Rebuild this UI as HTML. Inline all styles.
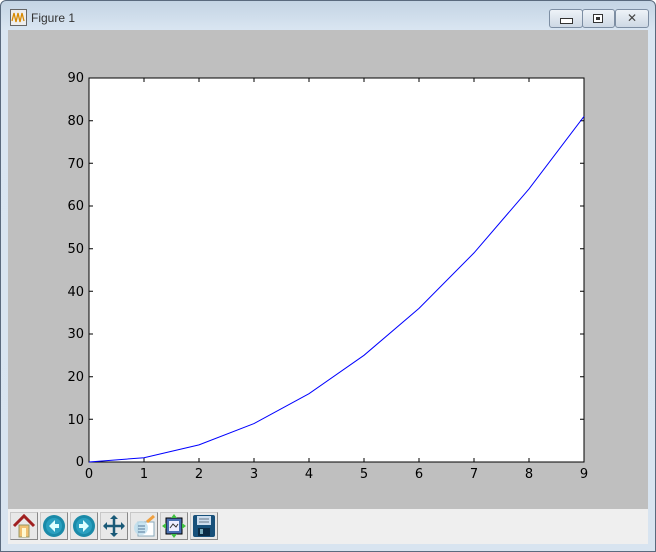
<!DOCTYPE html>
<html><head><style>
body{margin:0;width:656px;height:552px;overflow:hidden;font-family:"DejaVu Sans","Liberation Sans",sans-serif;}
.win{position:absolute;left:0;top:0;width:654px;height:550px;border:1px solid #5a6a7e;border-radius:6px 6px 0 0;background:linear-gradient(#c4d4e4,#dae6f2 30px,#d8e4f0);}
.client{position:absolute;left:8px;top:30px;width:640px;height:514px;background:#bfbfbf;}
.tb{position:absolute;left:0;top:479px;width:640px;height:35px;background:#efefef;}
.title{position:absolute;left:30px;top:10px;font-size:12px;color:#333;font-family:"Liberation Sans",sans-serif;}
.btn{position:absolute;top:8px;height:17px;border:1px solid #7d8ea3;border-radius:3px;background:linear-gradient(#eef3f8,#cdd8e4);}
.tbb{position:absolute;top:3px;width:28px;height:28px;border:1px solid #c8c8c8;border-right-color:#888;border-bottom-color:#888;background:#e8e8e8;box-sizing:border-box;}
</style></head><body>
<div class="win">
<svg style="position:absolute;left:9px;top:8px" width="18" height="18"><rect x="0.5" y="0.5" width="16" height="16" fill="#eee" stroke="#666"/><path d="M2 12 L4 4 L6 13 L8 4 L10 13 L12 4 L14 12" fill="none" stroke="#d98a00" stroke-width="1.3"/></svg>
<div class="title">Figure 1</div>
<div class="btn" style="left:548px;width:32px"><div style="position:absolute;left:10px;top:8px;width:11px;height:4px;border:1px solid #333;background:#fff"></div></div>
<div class="btn" style="left:581px;width:31px"><div style="position:absolute;left:10px;top:4px;width:8px;height:7px;border:1px solid #333;background:#fff"><div style="margin:2px;width:4px;height:3px;background:#333"></div></div></div>
<div class="btn" style="left:614px;width:32px;text-align:center;font-size:12px;font-weight:bold;line-height:17px;color:#444">✕</div>
</div>
<div class="client">
<svg width="640" height="479" style="position:absolute;left:0;top:0" font-family="DejaVu Sans, sans-serif" font-size="13">
<rect x="81" y="48" width="495" height="384" fill="#fff" stroke="#000"/>
<g stroke="#000">
<path d="M136 432v-4M191 432v-4M246 432v-4M301 432v-4M356 432v-4M411 432v-4M466 432v-4M521 432v-4M136 48v4M191 48v4M246 48v4M301 48v4M356 48v4M411 48v4M466 48v4M521 48v4"/>
<path d="M81 389.3h4M81 346.7h4M81 304h4M81 261.3h4M81 218.7h4M81 176h4M81 133.3h4M81 90.7h4M576 389.3h-4M576 346.7h-4M576 304h-4M576 261.3h-4M576 218.7h-4M576 176h-4M576 133.3h-4M576 90.7h-4"/>
</g>
<polyline fill="none" stroke="#0000ff" points="81,432 136,427.7 191,414.9 246,393.6 301,363.7 356,325.3 411,278.4 466,222.9 521,158.9 576,86.4"/>
<g text-anchor="middle" fill="#000">
<text x="81" y="448">0</text><text x="136" y="448">1</text><text x="191" y="448">2</text><text x="246" y="448">3</text><text x="301" y="448">4</text><text x="356" y="448">5</text><text x="411" y="448">6</text><text x="466" y="448">7</text><text x="521" y="448">8</text><text x="576" y="448">9</text>
</g>
<g text-anchor="end" fill="#000">
<text x="76" y="436">0</text><text x="76" y="394">10</text><text x="76" y="351">20</text><text x="76" y="308">30</text><text x="76" y="266">40</text><text x="76" y="223">50</text><text x="76" y="180">60</text><text x="76" y="138">70</text><text x="76" y="95">80</text><text x="76" y="52">90</text>
</g>
</svg>
<div class="tb">
<div class="tbb" style="left:2px"><svg width="26" height="26"><path d="M3 13 L13 3 L23 13" fill="none" stroke="#a02020" stroke-width="3"/><rect x="8" y="12" width="10" height="12" fill="#f0c070" stroke="#996"/><rect x="11" y="15" width="4" height="9" fill="#fff8d0"/></svg></div>
<div class="tbb" style="left:32px"><svg width="26" height="26"><circle cx="13" cy="13" r="11" fill="#1a8aa8"/><circle cx="13" cy="13" r="8" fill="#2aa0c0"/><path d="M8 13 L14 7 V11 H18 V15 H14 V19 Z" fill="#dff"/></svg></div>
<div class="tbb" style="left:62px"><svg width="26" height="26"><circle cx="13" cy="13" r="11" fill="#1a8aa8"/><circle cx="13" cy="13" r="8" fill="#2aa0c0"/><path d="M18 13 L12 7 V11 H8 V15 H12 V19 Z" fill="#dff"/></svg></div>
<div class="tbb" style="left:92px"><svg width="26" height="26"><path d="M13 3V23M3 13H23" stroke="#1a5a78" stroke-width="2.5"/><path d="M13 2l-4 4h8zM13 24l-4-4h8zM2 13l4-4v8zM24 13l-4-4v8z" fill="#1a5a78"/></svg></div>
<div class="tbb" style="left:122px"><svg width="26" height="26"><rect x="7" y="9" width="16" height="14" fill="#fff" stroke="#8ab"/><circle cx="10" cy="15" r="7" fill="#bde" opacity=".8"/><path d="M7 13h7M7 16h7M7 19h7" stroke="#579"/><path d="M16 9 L23 3" stroke="#f0a040" stroke-width="3"/></svg></div>
<div class="tbb" style="left:152px"><svg width="26" height="26"><rect x="5" y="5" width="16" height="16" fill="#4a70b0" stroke="#000"/><rect x="8" y="8" width="10" height="10" fill="#eef"/><path d="M9 15l3-4 3 3 2-3" fill="none" stroke="#333"/><path d="M13 1l-3 4h6zM13 25l-3-4h6zM1 13l4-3v6zM25 13l-4-3v6z" fill="#40c040"/></svg></div>
<div class="tbb" style="left:182px"><svg width="26" height="26"><rect x="2" y="2" width="22" height="22" rx="2" fill="#17507a"/><rect x="6" y="3" width="14" height="9" fill="#cde"/><path d="M8 6h10M8 9h10" stroke="#678"/><rect x="7" y="15" width="12" height="8" fill="#0a2a44"/><rect x="9" y="16" width="3" height="5" fill="#7ab"/></svg></div>
</div>
</div>
</body></html>
